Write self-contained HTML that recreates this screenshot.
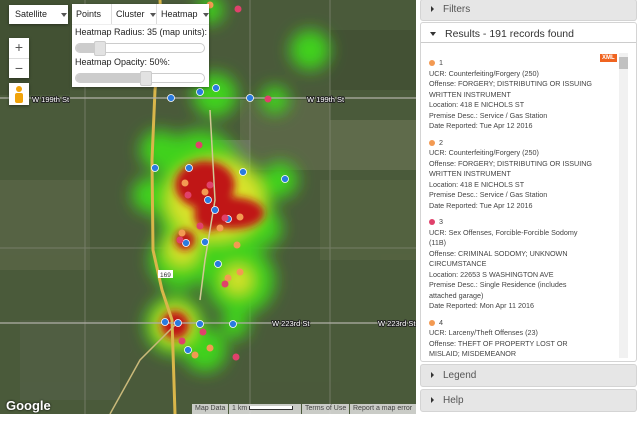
<!DOCTYPE html>
<html><head><style>
body{margin:0;width:640px;height:428px;background:#fff;font-family:"Liberation Sans",sans-serif;position:relative;overflow:hidden}
#map{position:absolute;left:0;top:0;width:416px;height:414px;overflow:hidden;background:#4d5a3c}
.ctl{position:absolute;background:#fff;box-shadow:0 1px 3px rgba(0,0,0,.4);font-size:9px;color:#222}
.arr{display:inline-block;width:0;height:0;border-left:3.5px solid transparent;border-right:3.5px solid transparent;border-top:4px solid #555;margin-left:5px;vertical-align:middle}
.slider{position:absolute;left:3px;width:128px;height:8px;border:1px solid #ccc;border-radius:5px;background:#fff}
.slider i{position:absolute;left:0;top:0;bottom:0;background:#ccc;border-radius:5px 0 0 5px}
.slider b{position:absolute;top:-3px;width:10px;height:13px;background:#e2e2e2;border:1px solid #ccc;border-radius:2px}
.panel{position:absolute;left:420px;width:215px;background:#e6e6e6;border:1px solid #d4d4d4;border-radius:3px;font-size:10px;color:#555}
.panel .h{padding:4px 0 0 10px}
.tri{display:inline-block;width:0;height:0;border-top:3px solid transparent;border-bottom:3px solid transparent;border-left:3.5px solid #333;margin-right:9px;vertical-align:middle}
.rec{font-size:7.2px;color:#444;line-height:10.5px;margin-bottom:6px}
.dot{display:inline-block;width:6px;height:6px;border-radius:50%;margin-right:4px;vertical-align:middle}
.attr{position:absolute;top:404px;height:10px;background:rgba(225,225,225,.85);font-size:7px;color:#444;line-height:10px;padding:0 3px}
.lbl{font-size:7.5px;fill:#fff;stroke:#222;stroke-width:2px;paint-order:stroke;stroke-linejoin:round}
</style></head><body>
<div id="map">
<svg width="416" height="414" viewBox="0 0 416 414">
<defs>
<filter id="b" x="-50%" y="-50%" width="200%" height="200%"><feGaussianBlur stdDeviation="8"/></filter>
<filter id="b2" x="-50%" y="-50%" width="200%" height="200%"><feGaussianBlur stdDeviation="4"/></filter>
</defs>
<rect width="416" height="414" fill="#4a5a3a"/>
<g opacity=".55">
<rect x="0" y="0" width="70" height="95" fill="#3d4a2f"/><rect x="240" y="100" width="90" height="70" fill="#6a7352"/>
<rect x="320" y="180" width="96" height="80" fill="#5c6a45"/><rect x="0" y="180" width="90" height="90" fill="#606b4c"/>
<rect x="330" y="30" width="86" height="60" fill="#3f4a30"/><rect x="260" y="330" width="80" height="84" fill="#4a5a3a"/>
<rect x="20" y="320" width="100" height="80" fill="#56624a"/><rect x="100" y="10" width="90" height="60" fill="#5c6648"/>
<rect x="330" y="120" width="86" height="50" fill="#717a5a"/><rect x="200" y="140" width="50" height="40" fill="#8a8c80"/>
</g>
<g stroke="#8c8f80" stroke-width="1" opacity=".6">
<line x1="0" y1="248" x2="416" y2="248"/>
<line x1="250" y1="0" x2="250" y2="414"/><line x1="330" y1="0" x2="330" y2="414"/><line x1="85" y1="0" x2="85" y2="414"/>
</g>
<g filter="url(#b)">
<g fill="#3fd21c">
<circle cx="310" cy="50" r="20"/><circle cx="210" cy="10" r="14"/><circle cx="215" cy="95" r="22"/><circle cx="275" cy="100" r="14"/>
<circle cx="160" cy="150" r="20"/><circle cx="215" cy="210" r="58"/><circle cx="200" cy="170" r="40"/><circle cx="180" cy="260" r="30"/>
<circle cx="240" cy="280" r="35"/><circle cx="280" cy="180" r="18"/><circle cx="175" cy="325" r="30"/><circle cx="205" cy="350" r="22"/>
<circle cx="235" cy="325" r="14"/><circle cx="150" cy="195" r="18"/><circle cx="262" cy="228" r="20"/>
</g>
<g fill="#d9e22a">
<ellipse cx="215" cy="200" rx="48" ry="40"/><circle cx="182" cy="250" r="16"/><circle cx="175" cy="325" r="19"/><circle cx="238" cy="280" r="14"/>
</g>
</g>
<g filter="url(#b2)" fill="#c01818">
<ellipse cx="205" cy="185" rx="30" ry="24"/><ellipse cx="232" cy="213" rx="32" ry="16"/><circle cx="175" cy="325" r="14"/><circle cx="185" cy="240" r="10"/><circle cx="210" cy="215" r="16"/>
</g>
<path d="M160 0 L162 40 L155 90 L152 160 L153 250 L162 290 L172 320 L175 414" stroke="#d9b64a" stroke-width="3" fill="none"/>
<path d="M110 414 L140 360 L175 325" stroke="#c9b97a" stroke-width="1.5" fill="none"/>
<path d="M0 98 L416 98 M0 323 L416 323" stroke="#b0b0a8" stroke-width="1.2"/>
<path d="M210 110 L215 200 L205 260 L200 300" stroke="#d2c895" stroke-width="1.5" fill="none"/>
<text class="lbl" x="32" y="102">W 199th St</text><text class="lbl" x="307" y="102">W 199th St</text><text class="lbl" x="272" y="326">W 223rd St</text><text class="lbl" x="378" y="326">W 223rd St</text>
<rect x="158" y="270" width="15" height="8" fill="#fff"/><text x="160" y="277" font-size="6.5" fill="#333">169</text>
<g>
<g fill="#2a7be0" stroke="#fff" stroke-width=".8"><circle cx="171" cy="98" r="3.5"/><circle cx="200" cy="92" r="3.5"/><circle cx="216" cy="88" r="3.5"/><circle cx="155" cy="168" r="3.5"/><circle cx="189" cy="168" r="3.5"/><circle cx="208" cy="200" r="3.5"/><circle cx="215" cy="210" r="3.5"/><circle cx="186" cy="243" r="3.5"/><circle cx="205" cy="242" r="3.5"/><circle cx="218" cy="264" r="3.5"/><circle cx="165" cy="322" r="3.5"/><circle cx="178" cy="323" r="3.5"/><circle cx="200" cy="324" r="3.5"/><circle cx="233" cy="324" r="3.5"/><circle cx="188" cy="350" r="3.5"/><circle cx="250" cy="98" r="3.5"/><circle cx="285" cy="179" r="3.5"/><circle cx="228" cy="219" r="3.5"/><circle cx="243" cy="172" r="3.5"/></g>
<g fill="#f39a52"><circle cx="185" cy="183" r="3.5"/><circle cx="205" cy="192" r="3.5"/><circle cx="240" cy="217" r="3.5"/><circle cx="237" cy="245" r="3.5"/><circle cx="228" cy="278" r="3.5"/><circle cx="240" cy="272" r="3.5"/><circle cx="195" cy="355" r="3.5"/><circle cx="210" cy="348" r="3.5"/><circle cx="182" cy="233" r="3.5"/><circle cx="220" cy="228" r="3.5"/><circle cx="210" cy="5" r="3.5"/></g>
<g fill="#e0416b"><circle cx="188" cy="195" r="3.5"/><circle cx="210" cy="185" r="3.5"/><circle cx="225" cy="218" r="3.5"/><circle cx="200" cy="226" r="3.5"/><circle cx="180" cy="240" r="3.5"/><circle cx="225" cy="284" r="3.5"/><circle cx="203" cy="332" r="3.5"/><circle cx="236" cy="357" r="3.5"/><circle cx="268" cy="99" r="3.5"/><circle cx="199" cy="145" r="3.5"/><circle cx="182" cy="341" r="3.5"/><circle cx="238" cy="9" r="3.5"/></g>
</g>
</svg>
<div class="ctl" style="left:9px;top:5px;width:59px;height:19px;line-height:19px;padding-left:6px;box-sizing:border-box">Satellite<span class="arr" style="margin-left:14px"></span></div>
<div class="ctl" style="left:72px;top:4px;width:137px;height:83px">
<div style="height:20px;line-height:20px;border-bottom:1px solid #eee;white-space:nowrap"><span style="display:inline-block;width:35px;padding-left:4px;border-right:1px solid #ddd">Points</span><span style="display:inline-block;width:40px;padding-left:4px;border-right:1px solid #ddd">Cluster<span class="arr"></span></span><span style="padding-left:4px">Heatmap<span class="arr"></span></span></div>
<div style="position:absolute;left:3px;top:23px">Heatmap Radius: 35 (map units):</div>
<div class="slider" style="top:39px"><i style="width:24px"></i><b style="left:18px"></b></div>
<div style="position:absolute;left:3px;top:53px">Heatmap Opacity: 50%:</div>
<div class="slider" style="top:69px"><i style="width:68px"></i><b style="left:64px"></b></div>
</div>
<div class="ctl" style="left:9px;top:38px;width:20px;height:40px;font-size:14px;text-align:center;color:#555"><div style="height:20px;line-height:19px;border-bottom:1px solid #ddd">+</div><div style="line-height:18px">−</div></div>
<div class="ctl" style="left:9px;top:83px;width:20px;height:22px"><div style="margin:3px auto 0;width:6px;height:6px;border-radius:50%;background:#f0a30a"></div><div style="margin:1px auto;width:8px;height:10px;border-radius:2px;background:#f0a30a"></div></div>
<div style="position:absolute;left:6px;top:398px;font-size:13px;font-weight:bold;color:#fff;text-shadow:0 0 2px #000">Google</div>
<div class="attr" style="left:192px">Map Data</div>
<div class="attr" style="left:229px;width:66px">1 km <span style="display:inline-block;width:42px;height:3px;border:1px solid #333;border-top:0;background:#fff;vertical-align:middle"></span></div>
<div class="attr" style="left:302px">Terms of Use</div>
<div class="attr" style="left:350px;width:60px">Report a map error</div>
</div>
<div class="panel" style="top:-1px;height:20px"><div class="h"><span class="tri"></span>Filters</div></div>
<div class="panel" style="top:22px;height:338px;background:#fff;font-size:10.5px;overflow:hidden">
<div style="height:20px;border-bottom:1px solid #ccc;padding:5px 0 0 9px;box-sizing:border-box;color:#333"><span class="tri" style="border-left:3px solid transparent;border-right:3px solid transparent;border-top:4px solid #333;border-bottom:0;margin-right:9px"></span>Results - 191 records found</div>
<div style="position:absolute;right:8px;top:30px;width:9px;height:305px;background:#f1f1f1"><div style="margin-top:4px;height:12px;background:#c1c1c1"></div></div>
<div style="position:absolute;left:179px;top:31px;background:#f06420;color:#fff;font-size:6px;font-weight:bold;padding:1px 2px">XML</div>
<div style="padding:15px 0 0 8px">
<div class="rec"><span class="dot" style="background:#f39a52"></span>1<br>UCR: Counterfeiting/Forgery (250)<br>Offense: FORGERY; DISTRIBUTING OR ISSUING<br>WRITTEN INSTRUMENT<br>Location: 418 E NICHOLS ST<br>Premise Desc.: Service / Gas Station<br>Date Reported: Tue Apr 12 2016</div>
<div class="rec"><span class="dot" style="background:#f39a52"></span>2<br>UCR: Counterfeiting/Forgery (250)<br>Offense: FORGERY; DISTRIBUTING OR ISSUING<br>WRITTEN INSTRUMENT<br>Location: 418 E NICHOLS ST<br>Premise Desc.: Service / Gas Station<br>Date Reported: Tue Apr 12 2016</div>
<div class="rec"><span class="dot" style="background:#e0416b"></span>3<br>UCR: Sex Offenses, Forcible-Forcible Sodomy<br>(11B)<br>Offense: CRIMINAL SODOMY; UNKNOWN<br>CIRCUMSTANCE<br>Location: 22653 S WASHINGTON AVE<br>Premise Desc.: Single Residence (includes<br>attached garage)<br>Date Reported: Mon Apr 11 2016</div>
<div class="rec"><span class="dot" style="background:#f39a52"></span>4<br>UCR: Larceny/Theft Offenses (23)<br>Offense: THEFT OF PROPERTY LOST OR<br>MISLAID; MISDEMEANOR<br>Theft Desc: Theft from Building</div>
</div></div>
<div class="panel" style="top:364px;height:21px"><div class="h" style="padding-top:5px"><span class="tri"></span>Legend</div></div>
<div class="panel" style="top:389px;height:21px"><div class="h" style="padding-top:5px"><span class="tri"></span>Help</div></div>
</body></html>
